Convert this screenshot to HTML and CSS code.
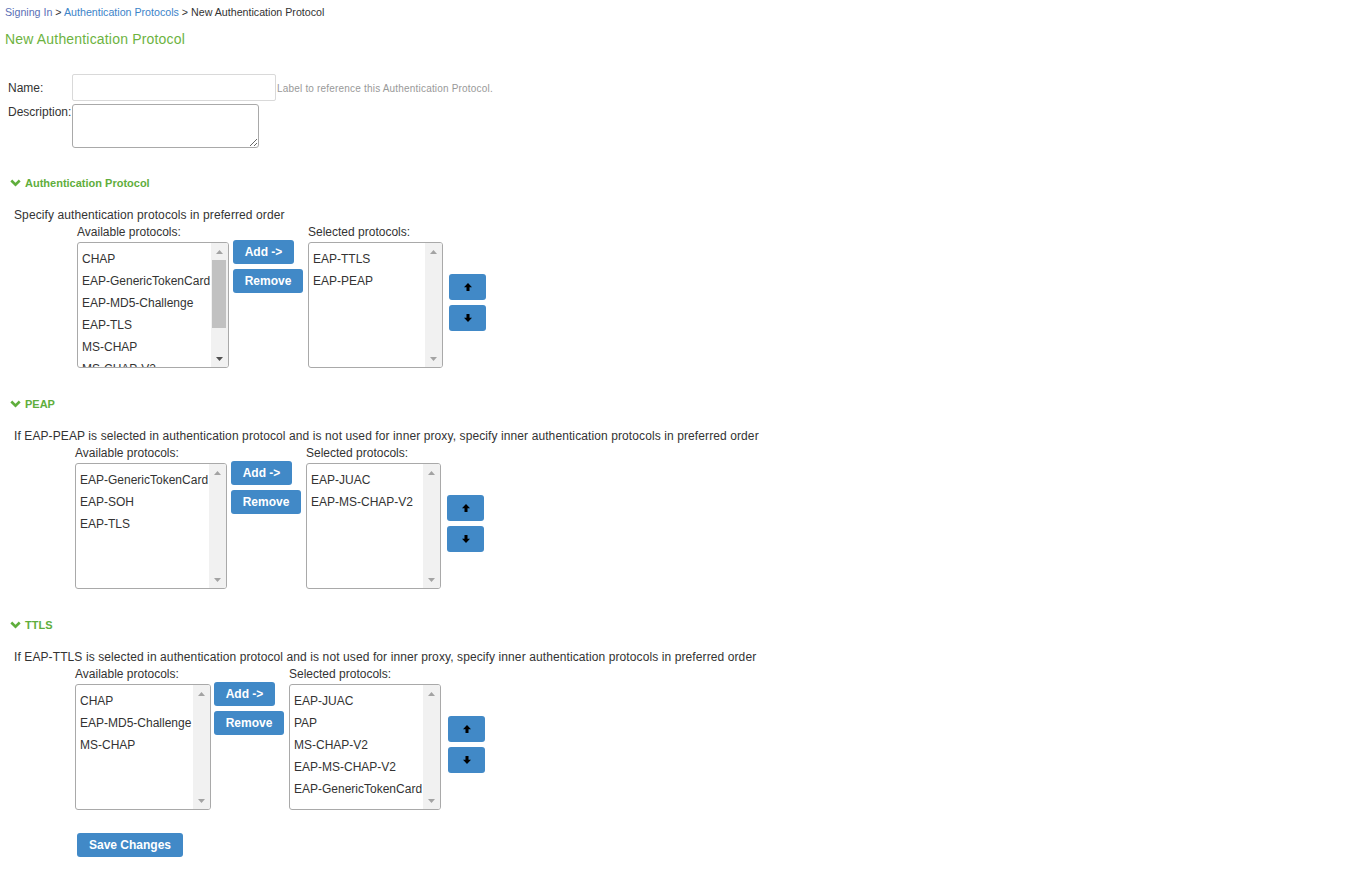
FILE: index.html
```html
<!DOCTYPE html>
<html lang="en">
<head>
<meta charset="utf-8">
<title>New Authentication Protocol</title>
<link rel="stylesheet" href="styles.css">
</head>
<body>
<div class="crumbs"><a class="crumb-visited" href="#">Signing In</a> &gt; <a class="crumb-link" href="#">Authentication Protocols</a> &gt; New Authentication Protocol</div>
<h1 class="title">New Authentication Protocol</h1>

<div class="form">
  <div class="frow name-row">
    <label class="flabel">Name:</label>
    <input class="name-input" type="text">
    <span class="hint">Label to reference this Authentication Protocol.</span>
  </div>
  <div class="frow desc-row">
    <label class="flabel desc-label">Description:</label>
    <textarea class="desc-input"></textarea>
  </div>
</div>

<section class="sec sec-first">
  <div class="sec-head"><svg class="chev" width="11" height="8" viewBox="0 0 11 8"><polyline points="1.3,1.5 5.5,5.7 9.7,1.5" fill="none" stroke="#5fae3c" stroke-width="2.6"/></svg>Authentication Protocol</div>
  <p class="sec-desc">Specify authentication protocols in preferred order</p>
  <div class="picker picker-a">
    <div class="col">
      <div class="col-label">Available protocols:</div>
      <div class="listbox w152">
        <div class="items">
          <div class="item">CHAP</div>
          <div class="item">EAP-GenericTokenCard</div>
          <div class="item">EAP-MD5-Challenge</div>
          <div class="item">EAP-TLS</div>
          <div class="item">MS-CHAP</div>
          <div class="item">MS-CHAP-V2</div>
          <div class="item">PAP</div>
        </div>
        <div class="sbar">
          <div class="sarrow"><svg width="7" height="4" viewBox="0 0 7 4"><path d="M0 4 L3.5 0 L7 4 Z" fill="#a3a3a3"/></svg></div>
          <div class="strack"><div class="sthumb"></div></div>
          <div class="sarrow"><svg width="7" height="4" viewBox="0 0 7 4"><path d="M0 0 L3.5 4 L7 0 Z" fill="#505050"/></svg></div>
        </div>
      </div>
    </div>
    <div class="movebtns mb4">
      <button class="btn btn-add">Add -&gt;</button>
      <button class="btn btn-remove">Remove</button>
    </div>
    <div class="col ml5">
      <div class="col-label">Selected protocols:</div>
      <div class="listbox w135">
        <div class="items">
          <div class="item">EAP-TTLS</div>
          <div class="item">EAP-PEAP</div>
        </div>
        <div class="sbar">
          <div class="sarrow"><svg width="7" height="4" viewBox="0 0 7 4"><path d="M0 4 L3.5 0 L7 4 Z" fill="#a3a3a3"/></svg></div>
          <div class="strack"></div>
          <div class="sarrow"><svg width="7" height="4" viewBox="0 0 7 4"><path d="M0 0 L3.5 4 L7 0 Z" fill="#a3a3a3"/></svg></div>
        </div>
      </div>
    </div>
    <div class="orderbtns ml6">
      <button class="btn sq"><svg width="8" height="8" viewBox="0 0 8 8"><path d="M4 0 L8 4.2 H5.5 V8 H2.5 V4.2 H0 Z" fill="#000"/></svg></button>
      <button class="btn sq"><svg width="8" height="8" viewBox="0 0 8 8"><path d="M4 8 L8 3.8 H5.5 V0 H2.5 V3.8 H0 Z" fill="#000"/></svg></button>
    </div>
  </div>
</section>

<section class="sec">
  <div class="sec-head"><svg class="chev" width="11" height="8" viewBox="0 0 11 8"><polyline points="1.3,1.5 5.5,5.7 9.7,1.5" fill="none" stroke="#5fae3c" stroke-width="2.6"/></svg>PEAP</div>
  <p class="sec-desc">If EAP-PEAP is selected in authentication protocol and is not used for inner proxy, specify inner authentication protocols in preferred order</p>
  <div class="picker picker-b">
    <div class="col">
      <div class="col-label">Available protocols:</div>
      <div class="listbox w152">
        <div class="items">
          <div class="item">EAP-GenericTokenCard</div>
          <div class="item">EAP-SOH</div>
          <div class="item">EAP-TLS</div>
        </div>
        <div class="sbar">
          <div class="sarrow"><svg width="7" height="4" viewBox="0 0 7 4"><path d="M0 4 L3.5 0 L7 4 Z" fill="#a3a3a3"/></svg></div>
          <div class="strack"></div>
          <div class="sarrow"><svg width="7" height="4" viewBox="0 0 7 4"><path d="M0 0 L3.5 4 L7 0 Z" fill="#a3a3a3"/></svg></div>
        </div>
      </div>
    </div>
    <div class="movebtns mb4">
      <button class="btn btn-add">Add -&gt;</button>
      <button class="btn btn-remove">Remove</button>
    </div>
    <div class="col ml5">
      <div class="col-label">Selected protocols:</div>
      <div class="listbox w135">
        <div class="items">
          <div class="item">EAP-JUAC</div>
          <div class="item">EAP-MS-CHAP-V2</div>
        </div>
        <div class="sbar">
          <div class="sarrow"><svg width="7" height="4" viewBox="0 0 7 4"><path d="M0 4 L3.5 0 L7 4 Z" fill="#a3a3a3"/></svg></div>
          <div class="strack"></div>
          <div class="sarrow"><svg width="7" height="4" viewBox="0 0 7 4"><path d="M0 0 L3.5 4 L7 0 Z" fill="#a3a3a3"/></svg></div>
        </div>
      </div>
    </div>
    <div class="orderbtns ml6">
      <button class="btn sq"><svg width="8" height="8" viewBox="0 0 8 8"><path d="M4 0 L8 4.2 H5.5 V8 H2.5 V4.2 H0 Z" fill="#000"/></svg></button>
      <button class="btn sq"><svg width="8" height="8" viewBox="0 0 8 8"><path d="M4 8 L8 3.8 H5.5 V0 H2.5 V3.8 H0 Z" fill="#000"/></svg></button>
    </div>
  </div>
</section>

<section class="sec">
  <div class="sec-head"><svg class="chev" width="11" height="8" viewBox="0 0 11 8"><polyline points="1.3,1.5 5.5,5.7 9.7,1.5" fill="none" stroke="#5fae3c" stroke-width="2.6"/></svg>TTLS</div>
  <p class="sec-desc">If EAP-TTLS is selected in authentication protocol and is not used for inner proxy, specify inner authentication protocols in preferred order</p>
  <div class="picker picker-b">
    <div class="col">
      <div class="col-label">Available protocols:</div>
      <div class="listbox w136">
        <div class="items">
          <div class="item">CHAP</div>
          <div class="item">EAP-MD5-Challenge</div>
          <div class="item">MS-CHAP</div>
        </div>
        <div class="sbar">
          <div class="sarrow"><svg width="7" height="4" viewBox="0 0 7 4"><path d="M0 4 L3.5 0 L7 4 Z" fill="#a3a3a3"/></svg></div>
          <div class="strack"></div>
          <div class="sarrow"><svg width="7" height="4" viewBox="0 0 7 4"><path d="M0 0 L3.5 4 L7 0 Z" fill="#a3a3a3"/></svg></div>
        </div>
      </div>
    </div>
    <div class="movebtns mb3">
      <button class="btn btn-add">Add -&gt;</button>
      <button class="btn btn-remove">Remove</button>
    </div>
    <div class="col ml5">
      <div class="col-label">Selected protocols:</div>
      <div class="listbox w152">
        <div class="items">
          <div class="item">EAP-JUAC</div>
          <div class="item">PAP</div>
          <div class="item">MS-CHAP-V2</div>
          <div class="item">EAP-MS-CHAP-V2</div>
          <div class="item">EAP-GenericTokenCard</div>
        </div>
        <div class="sbar">
          <div class="sarrow"><svg width="7" height="4" viewBox="0 0 7 4"><path d="M0 4 L3.5 0 L7 4 Z" fill="#a3a3a3"/></svg></div>
          <div class="strack"></div>
          <div class="sarrow"><svg width="7" height="4" viewBox="0 0 7 4"><path d="M0 0 L3.5 4 L7 0 Z" fill="#a3a3a3"/></svg></div>
        </div>
      </div>
    </div>
    <div class="orderbtns ml7">
      <button class="btn sq"><svg width="8" height="8" viewBox="0 0 8 8"><path d="M4 0 L8 4.2 H5.5 V8 H2.5 V4.2 H0 Z" fill="#000"/></svg></button>
      <button class="btn sq"><svg width="8" height="8" viewBox="0 0 8 8"><path d="M4 8 L8 3.8 H5.5 V0 H2.5 V3.8 H0 Z" fill="#000"/></svg></button>
    </div>
  </div>
</section>

<div class="actions">
  <button class="btn save">Save Changes</button>
</div>
</body>
</html>
```

FILE: styles.css
```css
* { box-sizing: border-box; }

body {
  margin: 0;
  background: #fff;
  color: #333;
  font-family: "Liberation Sans", Arial, sans-serif;
  font-size: 12px;
}

.crumbs {
  padding: 5px 0 0 5px;
  font-size: 10.67px;
  line-height: 14px;
  color: #333;
}
.crumbs a { text-decoration: none; }
.crumb-visited { color: #5a6fb6; }
.crumb-link { color: #3c84c9; }

.title {
  margin: 12px 0 0 5px;
  font-size: 14px;
  line-height: 17px;
  font-weight: normal;
  letter-spacing: 0.18px;
  color: #6db33f;
}

.form {
  margin: 26px 0 0 8px;
  display: flex;
  flex-direction: column;
  gap: 3px;
}
.frow { display: flex; }
.name-row { align-items: center; }
.desc-row { align-items: flex-start; }
.flabel {
  width: 64px;
  line-height: 14px;
  color: #333;
}
.desc-label { padding-top: 1px; }

.name-input {
  width: 204px;
  height: 27px;
  margin: 0;
  border: 1px solid #d9d9d9;
  border-radius: 2px;
  font: inherit;
  padding: 2px 4px;
}
.hint {
  margin-left: 1px;
  font-size: 10px;
  letter-spacing: 0.19px;
  color: #999;
  padding-top: 1px;
}
.desc-input {
  width: 187px;
  height: 44px;
  margin: 0;
  border: 1px solid #a9a9a9;
  border-radius: 3px;
  font: inherit;
  padding: 2px;
  resize: both;
}

.sec { margin-top: 29px; }
.sec-first { margin-top: 28px; }

.sec-head {
  display: flex;
  align-items: center;
  margin-left: 10px;
  height: 14px;
  line-height: 14px;
  font-size: 11px;
  font-weight: bold;
  color: #5fae3c;
}
.chev { margin-right: 4px; margin-top: -1px; }

.sec-desc {
  margin: 17px 0 0 14px;
  line-height: 16px;
  letter-spacing: 0.1px;
  color: #333;
  white-space: nowrap;
}

.picker {
  display: flex;
  align-items: flex-start;
  margin-top: 2px;
}
.picker-a { margin-left: 77px; }
.picker-b { margin-left: 75px; }

.col { display: flex; flex-direction: column; }
.col-label { line-height: 14px; margin-bottom: 3px; color: #333; }

.ml5 { margin-left: 5px; }
.ml6 { margin-left: 6px; }
.ml7 { margin-left: 7px; }
.mb4 { margin-left: 4px; }
.mb3 { margin-left: 3px; }

.listbox {
  display: flex;
  height: 126px;
  border: 1px solid #a9a9a9;
  border-radius: 3px;
  background: #fff;
  overflow: hidden;
}
.w152 { width: 152px; }
.w135 { width: 135px; }
.w136 { width: 136px; }

.items {
  flex: 1;
  min-width: 0;
  overflow: hidden;
  padding: 5px 0 0 4px;
}
.item {
  line-height: 22px;
  white-space: nowrap;
  color: #333;
}

.sbar {
  width: 17px;
  flex: none;
  display: flex;
  flex-direction: column;
  background: #f1f1f1;
}
.sarrow {
  height: 17px;
  display: flex;
  align-items: center;
  justify-content: center;
}
.strack { flex: 1; padding: 0 2px 0 1px; }
.sthumb {
  height: 68px;
  background: #c1c1c1;
}

.btn {
  display: flex;
  align-items: center;
  justify-content: center;
  margin: 0;
  height: 24px;
  padding: 0 12px;
  border: 0;
  border-radius: 3px;
  background: #4189c7;
  color: #fff;
  font-family: "Liberation Sans", Arial, sans-serif;
  font-size: 12px;
  font-weight: bold;
  white-space: nowrap;
  cursor: pointer;
}
.btn-add { width: 61px; padding: 0; }
.btn-remove { width: 70px; padding: 0; }

.movebtns {
  display: flex;
  flex-direction: column;
  align-items: flex-start;
  gap: 5px;
  margin-top: 15px;
}

.orderbtns {
  display: flex;
  flex-direction: column;
  gap: 5px;
  margin-top: 49px;
}
.sq { width: 37px; height: 26px; padding: 0; }

.actions { margin: 23px 0 0 77px; }
.save { width: 106px; padding: 0; }
```
